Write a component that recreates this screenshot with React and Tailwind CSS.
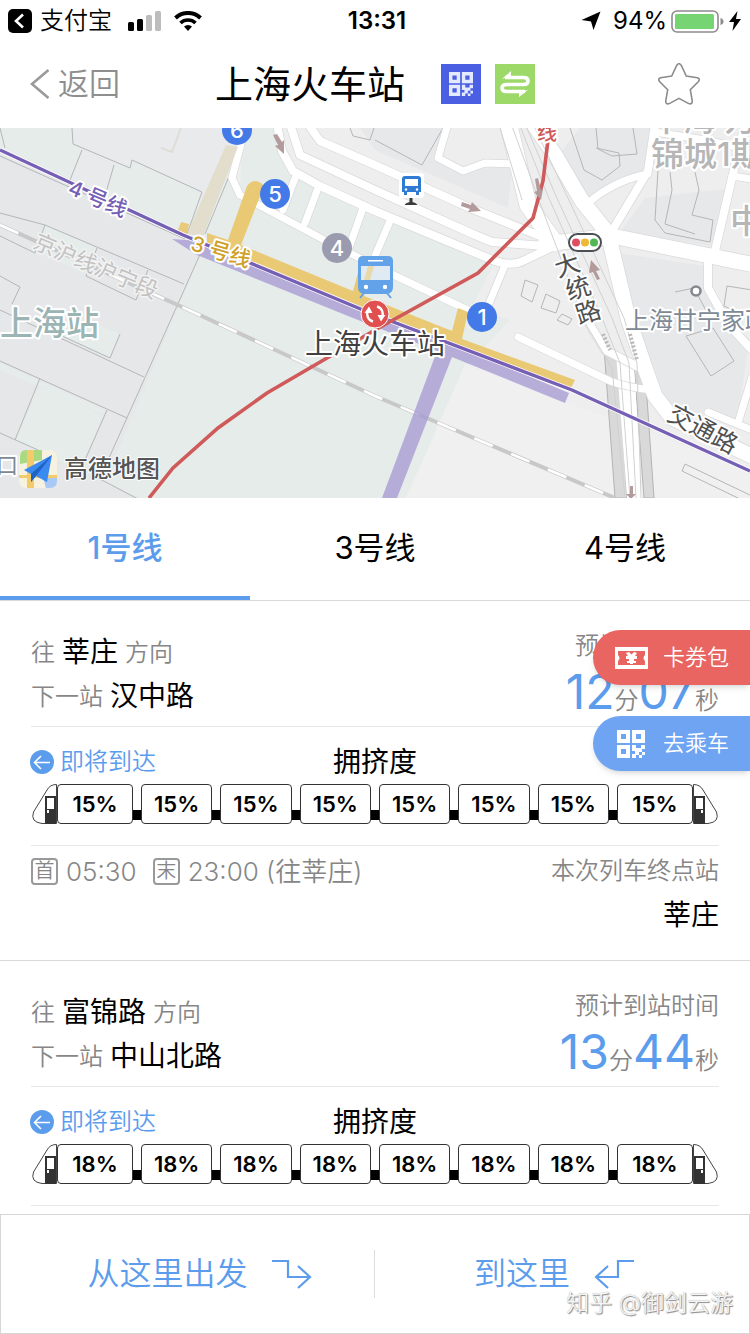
import React from "react";

const FONT = "font-['Inter','Noto_Sans_CJK_SC',sans-serif]";

function QrIcon({ className }) {
  return (
    <svg viewBox="0 0 28 28" className={className} aria-hidden="true" fill="currentColor">
      <path
        fillRule="evenodd"
        d="M0 0h13v13H0zM4 4v5h5V4zM15 0h13v13H15zM19 4v5h5V4zM0 15h13v13H0zM4 19v5h5v-5z"
      />
      <path d="M15 15h4v3h5v-3h4v4h-3v3h-3v3h-3v3h-4v-4h3v-3h-3zM25 22h3v3h-3zM22 25h3v3h-3z" />
    </svg>
  );
}

function StatusBar() {
  return (
    <div className="flex h-[42px] items-center justify-between px-2 text-2xl text-black">
      <div className="flex flex-1 items-center gap-2">
        <svg viewBox="0 0 24 24" className="size-6" aria-hidden="true">
          <rect width="24" height="24" rx="5" fill="#000" />
          <path d="M15 5.500 8 12l7 6.500" fill="none" stroke="#fff" strokeWidth="2.600" />
        </svg>
        <span className="font-[350]">支付宝</span>
        <svg viewBox="0 0 34 20" className="ml-2 h-5 w-[34px]" aria-hidden="true">
          <rect x="0" y="11" width="6" height="9" rx="1.500" fill="#000" />
          <rect x="9" y="8" width="6" height="12" rx="1.500" fill="#000" />
          <rect x="18" y="4" width="6" height="16" rx="1.500" fill="#bdbdbd" />
          <rect x="27" y="0" width="6" height="20" rx="1.500" fill="#bdbdbd" />
        </svg>
        <svg viewBox="0 0 28 20" className="ml-1 h-5 w-7" aria-hidden="true" fill="none" stroke="#000">
          <path d="M1.500 7a18 18 0 0 1 25 0" strokeWidth="4" />
          <path d="M6.500 12a11 11 0 0 1 15 0" strokeWidth="3.600" />
          <path d="M10 15.500a6 6 0 0 1 8 0L14 20z" fill="#000" stroke="none" />
        </svg>
      </div>
      <time className="pl-1 font-semibold">13:31</time>
      <div className="flex flex-1 items-center justify-end">
        <svg viewBox="0 0 20 20" className="mr-3 size-5" aria-hidden="true">
          <path d="M19.500 .5 12.500 19 10 10.500.500 9z" fill="#000" />
        </svg>
        <span>94%</span>
        <svg viewBox="0 0 54 23" className="ml-1 h-[23px] w-[54px]" aria-hidden="true">
          <rect x="1" y="1" width="46" height="21" rx="5" fill="#fff" stroke="#8c8c8f" strokeWidth="1.600" />
          <rect x="4" y="4" width="39" height="15" rx="1.500" fill="#76d572" />
          <path d="M49.500 8q3 1 3 3.500t-3 3.500z" fill="#8c8c8f" />
        </svg>
        <svg viewBox="0 0 12 20" className="mr-px ml-1 h-5 w-3" aria-hidden="true">
          <path d="M8.500 0 0 11h5L3.500 20 12 8H7z" fill="#000" />
        </svg>
      </div>
    </div>
  );
}

function Header() {
  return (
    <header className="flex h-[86px] items-center px-[30px] pb-[2px]">
      <a href="#back" className="flex flex-1 items-center gap-2 text-[31px] font-[350] text-[#8e8e8e]">
        <svg viewBox="0 0 20 30" className="h-[30px] w-5" aria-hidden="true">
          <path d="M18.500 1 2 15l16.500 14" fill="none" stroke="#9a9a9a" strokeWidth="2.600" />
        </svg>
        返回
      </a>
      <div className="flex items-center pl-5">
        <h1 className="text-[38px] leading-none text-black">上海火车站</h1>
        <button aria-label="二维码" className="ml-9 flex size-10 items-center justify-center bg-[#4a5fe2] text-[#e3eaff]">
          <QrIcon className="size-6" />
        </button>
        <button aria-label="换乘" className="ml-[14px] flex size-10 items-center justify-center bg-[#9cd968]">
          <svg viewBox="0 0 32 26" className="h-[26px] w-8" aria-hidden="true" fill="none" stroke="#fff">
            <path d="M6 6.500h18.500q4.500 0 4.500 3.500t-4.500 3.500H7.500q-4.500 0-4.500 3.500t4.500 3.500H26" strokeWidth="3.600" />
            <path d="M3 8 12 0v5zM29 19l-9 7v-5z" fill="#fff" stroke="none" />
          </svg>
        </button>
      </div>
      <div className="flex flex-1 justify-end pr-5">
        <button aria-label="收藏">
          <svg viewBox="0 0 42 42" className="size-[42px]" aria-hidden="true">
            <path
              d="M18.700 2.500q2.300-3.600 4.600 0l5 10.500 11 1.700q3.300 1 1.200 3.800l-8.200 8.300 2 11.300q0 3.600-3.600 2.500L21 35.400l-9.700 5.200q-3.600 1.100-3.600-2.500l2-11.300-8.200-8.300q-2.100-2.800 1.200-3.800l11-1.700z"
              fill="#fff"
              stroke="#8c8c8c"
              strokeWidth="1.600"
            />
          </svg>
        </button>
      </div>
    </header>
  );
}

function ExitPin({ x, y, n, fill }) {
  return (
    <g>
      <circle cx={x} cy={y} r="15" fill={fill} />
      <text x={x} y={y + 8} textAnchor="middle" fontSize="22" fontWeight="500" fill="#fff">{n}</text>
    </g>
  );
}

const ROADS = [
  ["M242 12 232 50 240 67 330 115 385 143 470 183", 7],
  ["M277 -4 282 23 293 43 320 58 375 83 495 133Q512 139 525 132L552 119", 8],
  ["M297 45 283 82M318 60 305 95M363 80 350 117M390 93 375 128M505 137 488 178", 7],
  ["M290 -4 300 27 375 62 475 107 492 114 545 118", 8],
  ["M308 -4 320 13 375 37 470 80 550 112", 8],
  ["M448 -4 438 30 463 43 485 35 515 36", 7],
  ["M508 -6 528 77 555 115", 17],
  ["M532 -6 555 27 582 73 610 108", 15],
  ["M608 105 628 190 645 240 655 268 672 290 760 332", 15],
  ["M545 116 612 108 760 138", 15],
  ["M655 -4 648 43 612 103", 8],
  ["M648 46Q615 52 588 75", 7],
  ["M655 4 705 12 750 22M732 48 752 51", 7],
  ["M745 -4 732 50 715 123 708 135 708 160 728 196 752 222", 8],
  ["M752 249 738 295M708 284 752 302", 7],
  ["M518 209 610 253Q625 259 652 262", 7],
  ["M586 190 605 222 650 245", 8],
];

function StationMap() {
  return (
    <svg
      viewBox="0 0 750 370"
      preserveAspectRatio="xMidYMid slice"
      className="block h-[370px] w-full"
      role="img"
      aria-label="上海火车站地图"
    >
      <rect width="750" height="370" fill="#eeeeef" />
      <path d="M0 0H242L232 50 470 180 510 192 465 240 405 370H0z" fill="#e5ecea" />
      <path d="M465 236 750 343V370H407z" fill="#f0f0f0" />
      <path d="M242 0H277L293 43 495 133 470 183 240 67z" fill="#e5ecea" />
      <path d="M0 22 180 106 202 122 109 344 85 332 105 282 0 235z" fill="#e6e7e9" />
      <path d="M0 242 127 297 98 350 85 332 107 290 40 258 12 318 0 312z" fill="#e6e7e9" />
      <path d="M0 305 64 335 140 370H0z" fill="#e6e7e9" />
      <path d="M0 0H242L200 92 202 64 130 32 126 40 73 16 72 0z" fill="#e8eaeb" />
      <path d="M82 22 114 37 105 72 68 57z" fill="#e8eaeb" />
      <path d="M45 97 97 120 86 146 35 124zM60 208 110 230 120 206 72 186z" fill="#e5ecea" />

      <path d="M442 0 438 30 463 43 512 37 508 80 375 22 360 0zM645 70 732 60 712 118 620 104zM618 125 705 138 706 160 748 220 738 290 672 285 640 235zM580 0H650V40L590 70 560 25z" fill="#e7e8ea" />

      <g fill="none" stroke="#b4b6b7" strokeWidth="1">
        <path d="M0 0 5 20M72 0 73 16 130 40 132 32 202 64 187 106M82 22 68 57M114 37 105 68M0 28 185 111M202 122 109 330M0 85 45 97 184 156M45 97 35 125 0 108M97 120 86 148 136 172 148 142M0 148 20 159 12 176M0 182 144 249M120 206 110 230 62 208M0 233 127 290M40 250 15 312M107 282 85 332M0 305 38 322M98 350 138 371M242 17 205 106M375 12 422 37 443 0" />
        <path d="M570 0 584 42 602 52 620 38 619 25 596 20M596 0 598 21 612 28 637 26 633 0M658 42 655 92 665 105 710 114 713 92 692 87 699 62 695 44M670 44 672 62 665 96 695 106" />
        <path d="M525 152 538 157 532 174 521 168zM546 166 560 173 556 185 541 180zM562 186 572 191 568 197 557 192zM675 164 694 160 710 190M752 162 727 158 724 178 750 190M686 208 713 200 734 233 711 248z" />
        <path d="M685 336 752 368M682 343 740 371M685 336 682 343M350 0 353 8 370 12 374 0" />
      </g>

      <path d="M604 220 618 224 627 370H615zM634 236 645 242 654 370H644z" fill="#d9d9da" stroke="#b3b3b3" />
      <path d="M616 225 634 238 642 370H627z" fill="#fff" />
      <g fill="none" strokeLinecap="round" strokeLinejoin="round">
        {ROADS.map(([d, w]) => <path key={d} d={d} stroke="#dadadb" strokeWidth={w + 1.500} />)}
        {ROADS.map(([d, w]) => <path key={d} d={d} stroke="#fff" strokeWidth={w} />)}
      </g>
      <g fill="none" stroke="#cfd1d0" strokeWidth="1">
        <path d="M512 -2 540 75 585 195 612 240 625 370M520 -2 548 68 600 185 620 235 630 370M526 -2 556 68 612 190 629 235 636 370M534 -2 568 70 624 190 637 235 641 370M500 0 522 72" />
      </g>
      <path d="M603 206 610 222M630 206 637 232" stroke="#b8b8b8" strokeWidth="4" strokeDasharray="2 2" />

      <path d="M0 97 180 178 375 268 615 370" fill="none" stroke="#c8c8c9" strokeWidth="4" />
      <path d="M0 97 180 178 375 268 615 370" fill="none" stroke="#fff" strokeWidth="2.600" strokeDasharray="20 20" />

      <path d="M181 0 172 24 161 20" stroke="#e0dcd8" strokeWidth="2" fill="none" />
      <path d="M226 17 238 19 203 108 187 106z" fill="#e2dac7" opacity=".85" />
      <path d="M181 94 189 96 187 106 178 102z" fill="#e8ca7a" />
      <path d="M172 111 200 113 380 186 569 265 565 275 452 229 397 370H382L437 223 353 190 197 127z" fill="#a99cd3" opacity=".8" />
      <path d="M207 105 228 112 247 58Q255 48 264 58L241 117 353 163 362 130 372 134 364 168 452 203 458 180 468 184 462 211 575 252 570 262 380 186 207 117z" fill="#eac975" />
      <path d="M0 22 183 107 375 187 572 262 750 343" fill="none" stroke="#fff" strokeWidth="5" />
      <path d="M0 22 183 107 375 187 572 262 750 343" fill="none" stroke="#7660b5" strokeWidth="3.400" />
      <path d="M548 12 543 53 533 90 478 145 375 202 267 265 218 300 173 340 149 370" fill="none" stroke="#cf5a59" strokeWidth="3.600" />

      <g fill="#b49b9b">
        <path d="M273 7 277 6 282 14 284 12 284 26 275 18 278 17zM462 74 471 77 472 74 481 83 468 84 470 81 461 78zM535 51 538 50 541 62 543 61 541 72 534 64 537 63zM591 132 600 142 596 143 600 151 597 152 593 144 589 145zM630 358H633V366H636L631 371 626 366H630z" />
      </g>

      <ExitPin x={237} y={2} n="6" fill="#4479e8" />
      <ExitPin x={275} y={66} n="5" fill="#4479e8" />
      <ExitPin x={337} y={120} n="4" fill="#9a9bae" />
      <ExitPin x={482} y={189} n="1" fill="#4479e8" />

      <g>
        <rect x="399" y="45" width="25" height="25" rx="3" fill="#fff" />
        <path d="M405 48h13q3 0 3 3v13h-19V51q0-3 3-3z" fill="#2f7bd4" />
        <path d="M405 51h13v7h-13z" fill="#fff" />
        <circle cx="406" cy="61.500" r="1.200" fill="#fff" />
        <circle cx="417" cy="61.500" r="1.200" fill="#fff" />
        <path d="M404 64h3v3h-3zM416 64h3v3h-3z" fill="#2f7bd4" />
        <path d="M409.500 70h3v4q4 1 5 3h-13q1-2 5-3z" fill="#3b3b3b" />
      </g>

      <g>
        <path d="M363 128h25q5 0 5 5v26q0 7-7 7h-21q-7 0-7-7v-26q0-5 5-5z" fill="#62a2e9" />
        <path d="M361 138h29v14h-29z" fill="#dfeaf3" />
        <path d="M364 152 368 138H374L370 152z" fill="#ead9a8" />
        <path d="M368 132h15v1.500h-15z" fill="#fff" />
        <circle cx="366" cy="159" r="2.200" fill="#fff" />
        <circle cx="385" cy="159" r="2.200" fill="#fff" />
        <path d="M364 165 360 170M387 165 391 170" stroke="#62a2e9" strokeWidth="2" />
      </g>
      <circle cx="375" cy="186" r="14" fill="#e0504e" stroke="#fff" strokeWidth="1" />
      <path d="M368 182.500a7.800 7.800 0 0 0 5 11M382 189.500a7.800 7.800 0 0 0-5-11" fill="none" stroke="#fff" strokeWidth="2.400" />
      <path d="M364.500 185 369 178.500 372.500 185zM385.500 187 381 193.500 377.500 187z" fill="#fff" />

      <rect x="569" y="106" width="32" height="17" rx="8.500" fill="#fff" stroke="#4c5054" strokeWidth="2" />
      <circle cx="576" cy="114.500" r="4" fill="#df4d60" />
      <circle cx="585" cy="114.500" r="4" fill="#f0b837" />
      <circle cx="594" cy="114.500" r="4" fill="#4fb855" />
      <circle cx="696" cy="163" r="4.500" fill="#fff" stroke="#85898e" strokeWidth="2.600" />

      <g stroke="#fff" strokeWidth="4" strokeLinejoin="round" style={{ paintOrder: "stroke" }} fontWeight="400">
        <text x="0" y="8" transform="translate(98 70) rotate(23)" textAnchor="middle" fontSize="21" fontWeight="500" fill="#7660b5">4 号线</text>
        <text x="0" y="8" transform="translate(221 123) rotate(17)" textAnchor="middle" fontSize="21" fontWeight="500" fill="#cf9f28">3 号线</text>
        <text x="0" y="8" transform="translate(96 138) rotate(23)" textAnchor="middle" fontSize="22" strokeWidth="3" stroke="#f2f3f3" fill="#c3c1c1">京沪线沪宁段</text>
        <text x="0" y="207" fontSize="33" fontWeight="500" fill="#9bb4b4">上海站</text>
        <text x="547" y="12" textAnchor="middle" fontSize="20" fontWeight="500" fill="#cf5a59">线</text>
        <text x="375" y="226" textAnchor="middle" fontSize="28" fill="#404040">上海火车站</text>
        <g fontSize="25" textAnchor="middle" fill="#505050">
          <text transform="translate(567 137) rotate(-18)" y="9">大</text>
          <text transform="translate(578 160) rotate(-18)" y="9">统</text>
          <text transform="translate(588 184) rotate(-18)" y="9">路</text>
          <text transform="translate(703 301) rotate(28)" y="9">交通路</text>
        </g>
        <text x="625" y="201" fontSize="24" fill="#7d8994">上海甘宁家政</text>
        <text x="650" y="3" fontSize="33" fontWeight="500" fill="#b6b6b7">中海 万</text>
        <text x="651" y="38" fontSize="33" fontWeight="500" fill="#b6b6b7">锦城1期</text>
        <text x="730" y="105" fontSize="33" fontWeight="500" fill="#b6b6b7">中海</text>
        <text x="-4" y="345" fontSize="22" fill="#7d8994">口</text>
        <text x="64" y="349" fontSize="24" fontWeight="500" fill="#555" strokeWidth="2">高德地图</text>
      </g>

      <g>
        <rect x="19" y="322" width="38" height="38" rx="7" fill="#f7f2df" />
        <path d="M26 322H42V332L20 336V329Q20 322 26 322z" fill="#a9d981" />
        <path d="M27 322 34 322 34 360 27 360zM19 347H57V350H19z" fill="#f3cb6b" />
        <path d="M43 350H57V353Q57 360 50 360H46z" fill="#a9c8f5" />
        <path d="M52 327 47 354 36 348 31 354V346L24 342z" fill="#3a8af0" />
        <path d="M52 327 31 346V354L36 348z" fill="#1f63c4" />
      </g>
    </svg>
  );
}

function Tabs() {
  return (
    <nav role="tablist" className="grid h-[103px] grid-cols-3 border-b border-[#d9d9d9] text-[31px] text-black">
      <button role="tab" aria-selected="true" className="border-b-4 border-[#5c9cec] pt-[2px] font-medium text-[#5c9cec]">1号线</button>
      <button role="tab" aria-selected="false" className="border-b-4 border-transparent pt-[2px]">3号线</button>
      <button role="tab" aria-selected="false" className="border-b-4 border-transparent pt-[2px]">4号线</button>
    </nav>
  );
}

function Nose({ flip }) {
  return (
    <svg viewBox="0 0 25 40" className={flip ? "h-10 w-[25px] -scale-x-100" : "h-10 w-[25px]"} aria-hidden="true">
      <path d="M24.500 .5Q18 .5 15 6L1.500 28Q-2 38 10 39.500H24.500z" fill="#fff" stroke="#444" />
      <path d="M13 12h11v28H13z" fill="#333" />
      <path d="M15 14h7v11h-7zM15 26h2v3h-2z" fill="#fff" />
    </svg>
  );
}

function Train({ load }) {
  return (
    <div className="mx-px flex h-10">
      <Nose />
      {Array.from({ length: 8 }, (_, i) => (
        <React.Fragment key={i}>
          {i > 0 && <span className="mt-[26px] h-[10px] w-2 bg-black" />}
          <span
            className={
              i === 0 || i === 7
                ? "flex w-[76px] items-center justify-center rounded-sm border border-[#333] bg-white text-[22px] font-semibold text-black"
                : "flex flex-1 items-center justify-center rounded-sm border border-[#333] bg-white text-[22px] font-semibold text-black"
            }
          >
            {load}
          </span>
        </React.Fragment>
      ))}
      <Nose flip />
    </div>
  );
}

function Direction({ to, next, min, sec, load, children }) {
  return (
    <section className="px-[31px]">
      <div className="flex h-[126px] justify-between border-b border-[#e8e8e8] pt-[30px] text-2xl font-[350] text-[#868686]">
        <div>
          <p className="flex h-11 items-center gap-[7px]">往 <strong className="text-[28px] font-normal text-black">{to}</strong> 方向</p>
          <p className="flex h-11 items-center gap-[7px]">下一站 <strong className="text-[28px] font-normal text-black">{next}</strong></p>
        </div>
        <div className="text-right">
          <p className="leading-[30px]">预计到站时间</p>
          <p className="leading-[62px]">
            <span className="text-5xl leading-[62px] font-normal text-[#5c9cec]">{min}</span>分
            <span className="text-5xl leading-[62px] font-normal text-[#5c9cec]">{sec}</span>秒
          </p>
        </div>
      </div>
      <div className="h-[119px] border-b border-[#e8e8e8] pt-[14px]">
        <div className="mb-[3px] grid h-10 grid-cols-3 items-center">
          <p className="flex items-center gap-[6px] text-2xl font-[350] text-[#5c9cec]">
            <svg viewBox="0 0 24 24" className="-ml-px size-6" aria-hidden="true">
              <circle cx="12" cy="12" r="12" fill="#5c9cec" />
              <path d="M20 12.500H4.500M11 6l-6.500 6.500L11 19" fill="none" stroke="#fff" strokeWidth="1.600" />
            </svg>
            即将到达
          </p>
          <h2 className="text-center text-[28px] text-black">拥挤度</h2>
        </div>
        <Train load={load} />
      </div>
      {children}
    </section>
  );
}

function Boxed({ children }) {
  return (
    <span className="mr-2 flex size-[27px] items-center justify-center rounded border-2 border-[#999] text-[20px] leading-none">
      {children}
    </span>
  );
}

export default function App() {
  return (
    <div className={`flex min-h-screen flex-col bg-white ${FONT}`} lang="zh-CN">
      <StatusBar />
      <Header />
      <StationMap />
      <Tabs />
      <main className="relative pb-2">
        <Direction to="莘庄" next="汉中路" min="12" sec="07" load="15%">
          <div className="flex h-[114px] justify-between pt-[3px] font-[350] text-[#868686]">
            <p className="flex h-11 items-center text-[26px]">
              <Boxed>首</Boxed>05:30
              <span className="ml-4 flex items-center"><Boxed>末</Boxed>23:00 (往莘庄)</span>
            </p>
            <p className="text-right text-2xl leading-[44px]">
              本次列车终点站
              <strong className="block text-[28px] leading-[44px] font-normal text-black">莘庄</strong>
            </p>
          </div>
        </Direction>
        <hr className="border-[#d9d9d9]" />
        <Direction to="富锦路" next="中山北路" min="13" sec="44" load="18%" />

        <div className="absolute top-[29px] right-0 flex w-[157px] flex-col gap-[31px] text-[22px] font-[350] text-white">
          <a href="#coupons" className="flex h-[55px] items-center rounded-l-full bg-[#e86562] pl-[22px] shadow-md">
            <svg viewBox="0 0 33 22" className="mr-[15px] h-[22px] w-[33px]" aria-hidden="true">
              <path d="M0 0h33v22H0z" fill="#fff" />
              <path d="M3 4h27v4q-3 3 0 6v4H3v-4q3-3 0-6z" fill="#e86562" />
              <path d="M11 6 14 5l2.500 2.500L19 5l3 1-2 3h2v3h-3v2h2v2h-3v1h-3v-1h-3v-2h2v-2h-3V9h2z" fill="#fff" />
            </svg>
            卡券包
          </a>
          <a href="#ride" className="flex h-[55px] items-center rounded-l-full bg-[#6ea4f2] pl-6 shadow-md">
            <QrIcon className="mr-[18px] size-7" />
            去乘车
          </a>
        </div>
      </main>

      <footer className="relative mt-auto grid h-[120px] grid-cols-2 items-center border border-[#d6d6d6] bg-white text-[32px] font-[350] text-[#5c9cec]">
        <button className="flex h-12 items-center justify-center gap-6 border-r border-[#dcdcdc] pl-6">
          从这里出发
          <svg viewBox="0 0 40 30" className="h-[30px] w-10" aria-hidden="true" fill="none" stroke="currentColor" strokeWidth="2.200">
            <path d="M0 2H16V18H38M26 7 38 18 26 29" />
          </svg>
        </button>
        <button className="flex h-12 items-center justify-center gap-6 pr-4">
          到这里
          <svg viewBox="0 0 40 30" className="h-[30px] w-10" aria-hidden="true" fill="none" stroke="currentColor" strokeWidth="2.200">
            <path d="M40 2H24V18H2M14 7 2 18 14 29" />
          </svg>
        </button>
        <span className="absolute right-4 bottom-3 text-[23px] leading-[36px] font-[350] text-[#f4f4f4] [text-shadow:1px_1px_1px_#888,0_0_1px_#aaa]">
          知乎 @御剑云游
        </span>
      </footer>
    </div>
  );
}
